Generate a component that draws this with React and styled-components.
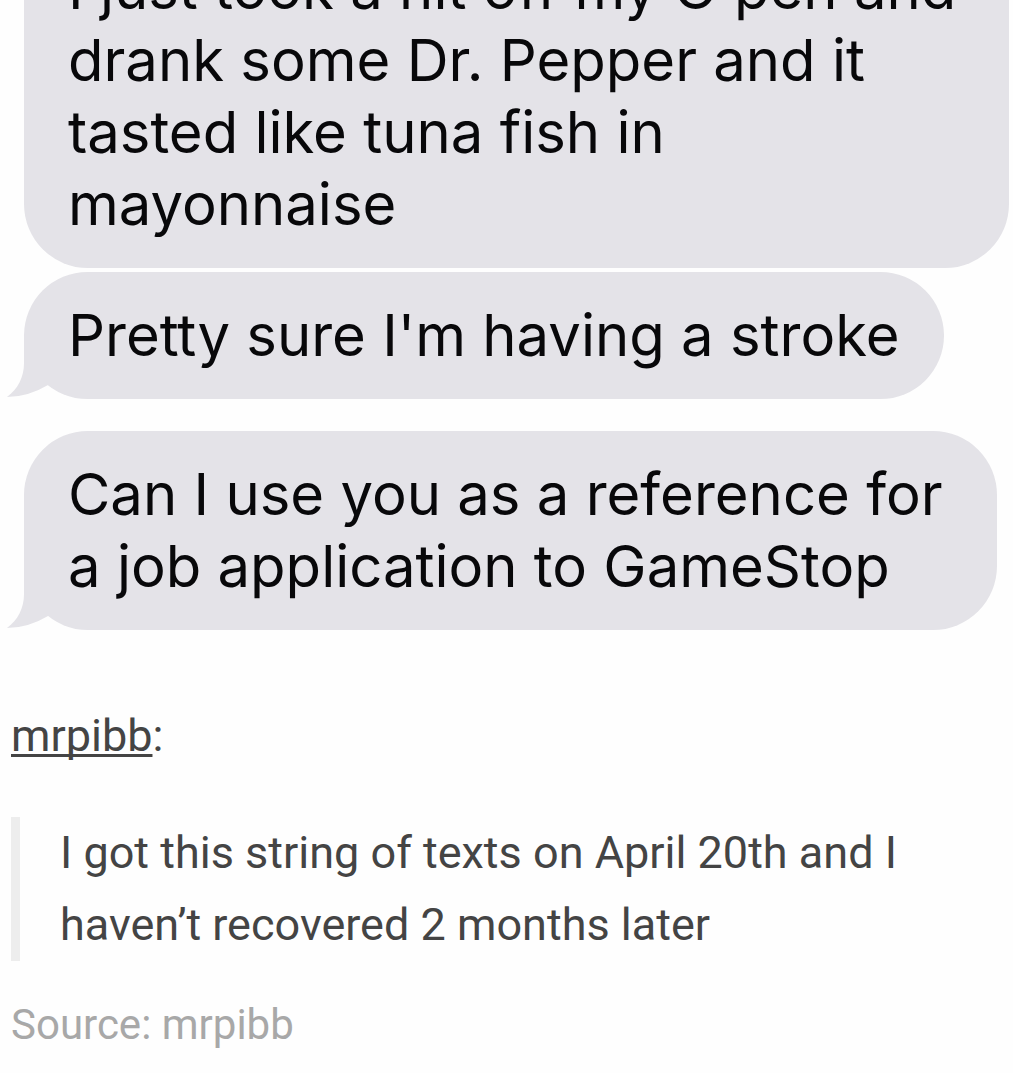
import React from 'react';
import styled, { createGlobalStyle } from 'styled-components';

const GlobalStyle = createGlobalStyle`
  * {
    box-sizing: border-box;
  }

  body {
    margin: 0;
    background: #fefefe;
  }
`;

const Post = styled.article`
  min-height: 100vh;
  overflow: hidden;
  color: #444;
  font-family: Roboto, sans-serif;
  font-size: 45px;
  line-height: 72px;
`;

const Thread = styled.section`
  display: flex;
  flex-direction: column;
  align-items: flex-start;
  padding: 0 4px 0 24px;
`;

const Bubble = styled.p`
  position: relative;
  width: ${({ $inset }) => ($inset === undefined ? 'auto' : `calc(100% - ${$inset}px)`)};
  max-width: 100%;
  margin: ${({ $gap }) => $gap}px 0 0;
  padding: 27px 44px 28px;
  border-radius: 64px;
  background: #e4e3e8;
  color: #08080a;
  font-family: Inter, sans-serif;
  font-size: 58px;
  line-height: 72px;
`;

const Tail = styled.svg`
  position: absolute;
  left: -18px;
  bottom: 0;
  width: 64px;
  height: 64px;
  fill: #e4e3e8;
`;

const Caption = styled.section`
  padding: 70px 11px 24px;
`;

const Author = styled.p`
  margin: 0;
`;

const AuthorLink = styled.a`
  color: inherit;
  text-decoration: underline;
  text-decoration-thickness: 3px;
  text-underline-offset: 3px;
  text-decoration-skip-ink: none;
`;

const Quote = styled.blockquote`
  margin: 45px 0 0;
  padding-left: 40px;
  border-left: 9px solid #ededed;
`;

const Source = styled.footer`
  margin-top: 28px;
  color: #a8a8a8;
  font-size: 42px;
`;

const SourceLink = styled.a`
  color: inherit;
  text-decoration: none;
`;

const Message = ({ gap, inset, tail, children }) => (
  <Bubble $gap={gap} $inset={inset}>
    {children}
    {tail && (
      <Tail viewBox="0 0 64 64" aria-hidden="true">
        <path d="M18 0 V28 C18 42 12 54 1 62 Q22 62 42 50 H64 V0 Z" />
      </Tail>
    )}
  </Bubble>
);

const App = () => (
  <Post>
    <GlobalStyle />
    <Thread>
      {/* scrolled partly past the top edge */}
      <Message gap={-75} inset={0}>
        I just took a hit off my O pen and drank some Dr. Pepper and it tasted
        like tuna fish in mayonnaise
      </Message>
      <Message gap={4} tail>
        Pretty sure I'm having a stroke
      </Message>
      <Message gap={32} inset={12} tail>
        Can I use you as a reference for a job application to GameStop
      </Message>
    </Thread>
    <Caption>
      <Author>
        <AuthorLink href="#mrpibb">mrpibb</AuthorLink>:
      </Author>
      <Quote>
        I got this string of texts on April 20th and I haven’t recovered 2
        months later
      </Quote>
      <Source>
        Source: <SourceLink href="#source">mrpibb</SourceLink>
      </Source>
    </Caption>
  </Post>
);

export default App;
